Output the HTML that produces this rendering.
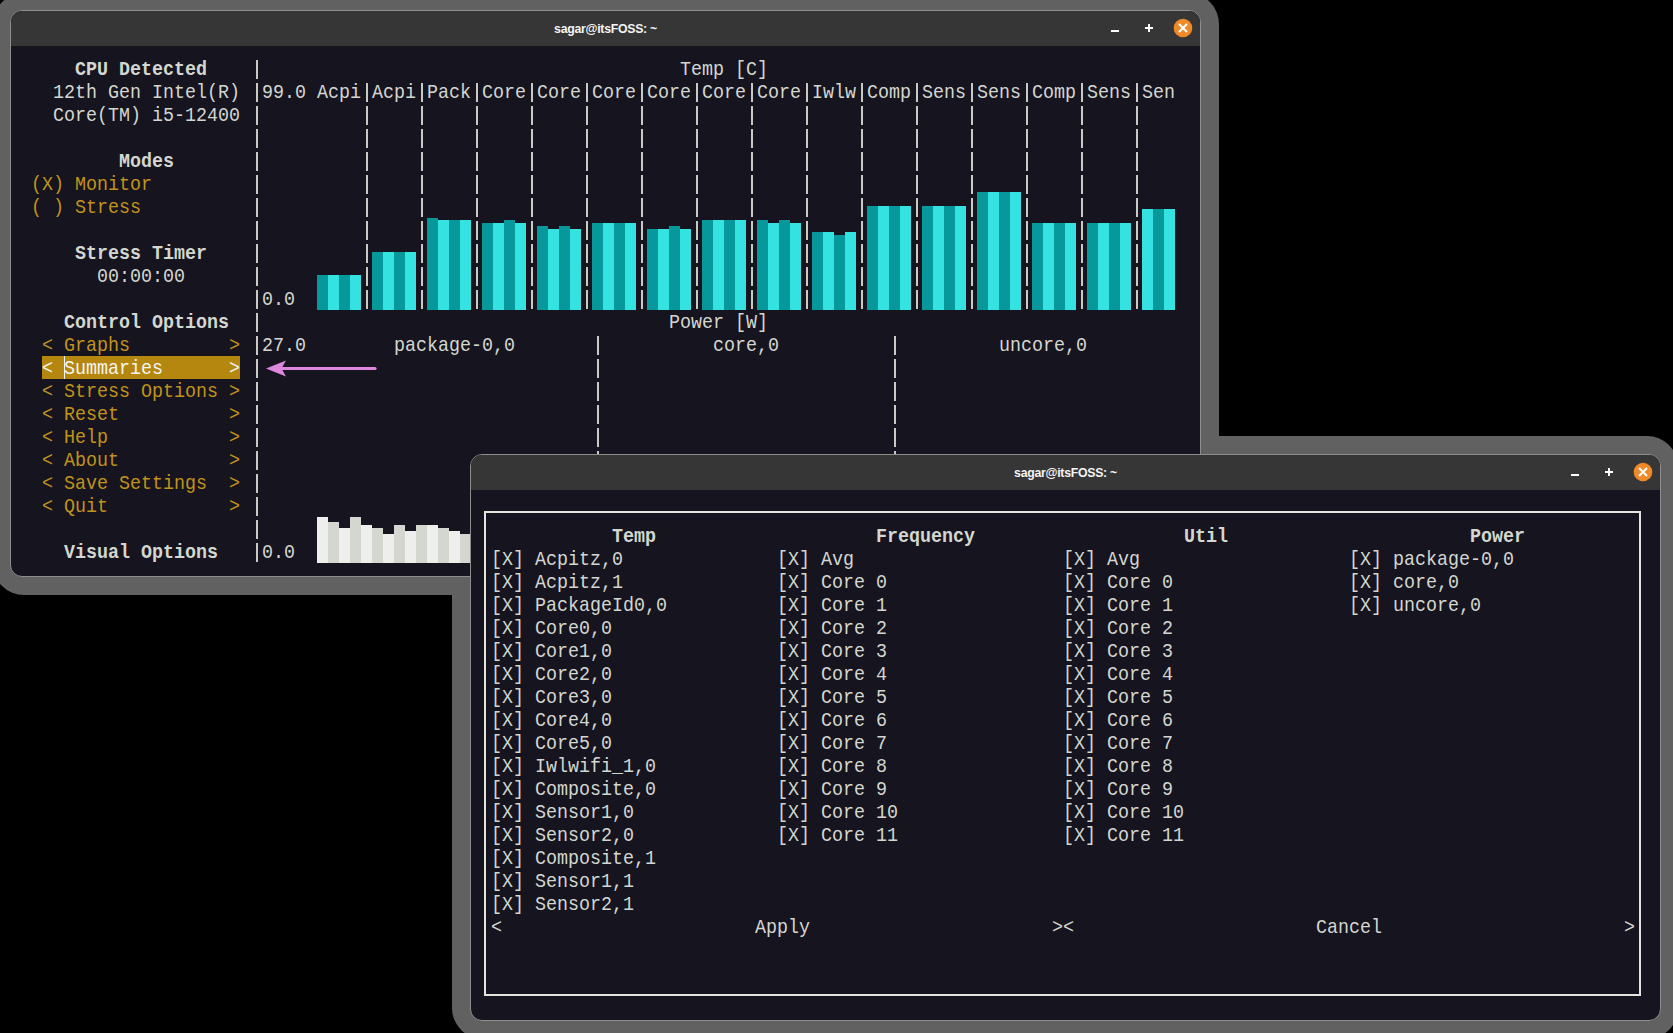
<!DOCTYPE html>
<html><head><meta charset="utf-8"><style>
html,body{margin:0;padding:0;}
body{width:1673px;height:1033px;background:#000;position:relative;overflow:hidden;}
.frame{position:absolute;background:#616161;border-radius:31px;}
.win{position:absolute;width:1189px;height:565px;border:1px solid #8e8e8e;border-radius:12px;overflow:hidden;background:#16141f;}
.tb{position:absolute;left:0;top:0;width:1189px;height:35px;background:#363636;}
.ttl{position:absolute;left:0;top:0;width:1189px;height:35px;line-height:35px;text-align:center;color:#f4f4f4;font-family:"Liberation Sans",sans-serif;font-size:13.5px;font-weight:bold;letter-spacing:-0.3px;transform:scaleX(0.91);}
.p{position:absolute;width:2px;height:19px;background:#c9cac3;}
.r{position:absolute;}
.t{position:absolute;white-space:pre;font-family:"Liberation Mono",monospace;font-size:21.0px;line-height:23px;height:23px;color:#d3d7cf;transform:scaleX(0.87287);transform-origin:0 0;}
</style></head><body>

<div class="frame" style="left:-7px;top:-7px;width:1226px;height:602px"></div>
<div class="frame" style="left:452px;top:436px;width:1226px;height:603px"></div>
<div class="win" style="left:10px;top:10px"><div class="tb"><div class="ttl">sagar@itsFOSS: ~</div><div class="r" style="left:1100px;top:19px;width:8px;height:2px;background:#fff"></div><div class="r" style="left:1134px;top:16px;width:8px;height:2px;background:#fff"></div><div class="r" style="left:1137px;top:13px;width:2px;height:8px;background:#fff"></div><svg class="r" style="left:1161px;top:6px" width="22" height="22" viewBox="0 0 22 22"><circle cx="11" cy="11" r="9.3" fill="#f08a28"/><path d="M7 7L15 15M15 7L7 15" stroke="#fff" stroke-width="2.1" stroke-linecap="butt"/></svg></div><div class="r" style="left:306px;top:264px;width:11px;height:35px;background:#06989a;"></div><div class="r" style="left:317px;top:264px;width:11px;height:35px;background:#34e2e2;"></div><div class="r" style="left:328px;top:264px;width:11px;height:35px;background:#06989a;"></div><div class="r" style="left:339px;top:264px;width:11px;height:35px;background:#34e2e2;"></div><div class="r" style="left:361px;top:241px;width:11px;height:58px;background:#06989a;"></div><div class="r" style="left:372px;top:241px;width:11px;height:58px;background:#34e2e2;"></div><div class="r" style="left:383px;top:241px;width:11px;height:58px;background:#06989a;"></div><div class="r" style="left:394px;top:241px;width:11px;height:58px;background:#34e2e2;"></div><div class="r" style="left:416px;top:207px;width:11px;height:92px;background:#06989a;"></div><div class="r" style="left:427px;top:209px;width:11px;height:90px;background:#34e2e2;"></div><div class="r" style="left:438px;top:209px;width:11px;height:90px;background:#06989a;"></div><div class="r" style="left:449px;top:209px;width:11px;height:90px;background:#34e2e2;"></div><div class="r" style="left:471px;top:212px;width:11px;height:87px;background:#06989a;"></div><div class="r" style="left:482px;top:212px;width:11px;height:87px;background:#34e2e2;"></div><div class="r" style="left:493px;top:209px;width:11px;height:90px;background:#06989a;"></div><div class="r" style="left:504px;top:212px;width:11px;height:87px;background:#34e2e2;"></div><div class="r" style="left:526px;top:215px;width:11px;height:84px;background:#06989a;"></div><div class="r" style="left:537px;top:218px;width:11px;height:81px;background:#34e2e2;"></div><div class="r" style="left:548px;top:215px;width:11px;height:84px;background:#06989a;"></div><div class="r" style="left:559px;top:218px;width:11px;height:81px;background:#34e2e2;"></div><div class="r" style="left:581px;top:212px;width:11px;height:87px;background:#06989a;"></div><div class="r" style="left:592px;top:212px;width:11px;height:87px;background:#34e2e2;"></div><div class="r" style="left:603px;top:212px;width:11px;height:87px;background:#06989a;"></div><div class="r" style="left:614px;top:212px;width:11px;height:87px;background:#34e2e2;"></div><div class="r" style="left:636px;top:218px;width:11px;height:81px;background:#06989a;"></div><div class="r" style="left:647px;top:218px;width:11px;height:81px;background:#34e2e2;"></div><div class="r" style="left:658px;top:215px;width:11px;height:84px;background:#06989a;"></div><div class="r" style="left:669px;top:218px;width:11px;height:81px;background:#34e2e2;"></div><div class="r" style="left:691px;top:209px;width:11px;height:90px;background:#06989a;"></div><div class="r" style="left:702px;top:209px;width:11px;height:90px;background:#34e2e2;"></div><div class="r" style="left:713px;top:209px;width:11px;height:90px;background:#06989a;"></div><div class="r" style="left:724px;top:209px;width:11px;height:90px;background:#34e2e2;"></div><div class="r" style="left:746px;top:209px;width:11px;height:90px;background:#06989a;"></div><div class="r" style="left:757px;top:212px;width:11px;height:87px;background:#34e2e2;"></div><div class="r" style="left:768px;top:209px;width:11px;height:90px;background:#06989a;"></div><div class="r" style="left:779px;top:212px;width:11px;height:87px;background:#34e2e2;"></div><div class="r" style="left:801px;top:221px;width:11px;height:78px;background:#06989a;"></div><div class="r" style="left:812px;top:221px;width:11px;height:78px;background:#34e2e2;"></div><div class="r" style="left:823px;top:224px;width:11px;height:75px;background:#06989a;"></div><div class="r" style="left:834px;top:221px;width:11px;height:78px;background:#34e2e2;"></div><div class="r" style="left:856px;top:195px;width:11px;height:104px;background:#06989a;"></div><div class="r" style="left:867px;top:195px;width:11px;height:104px;background:#34e2e2;"></div><div class="r" style="left:878px;top:195px;width:11px;height:104px;background:#06989a;"></div><div class="r" style="left:889px;top:195px;width:11px;height:104px;background:#34e2e2;"></div><div class="r" style="left:911px;top:195px;width:11px;height:104px;background:#06989a;"></div><div class="r" style="left:922px;top:195px;width:11px;height:104px;background:#34e2e2;"></div><div class="r" style="left:933px;top:195px;width:11px;height:104px;background:#06989a;"></div><div class="r" style="left:944px;top:195px;width:11px;height:104px;background:#34e2e2;"></div><div class="r" style="left:966px;top:181px;width:11px;height:118px;background:#06989a;"></div><div class="r" style="left:977px;top:181px;width:11px;height:118px;background:#34e2e2;"></div><div class="r" style="left:988px;top:181px;width:11px;height:118px;background:#06989a;"></div><div class="r" style="left:999px;top:181px;width:11px;height:118px;background:#34e2e2;"></div><div class="r" style="left:1021px;top:212px;width:11px;height:87px;background:#06989a;"></div><div class="r" style="left:1032px;top:212px;width:11px;height:87px;background:#34e2e2;"></div><div class="r" style="left:1043px;top:212px;width:11px;height:87px;background:#06989a;"></div><div class="r" style="left:1054px;top:212px;width:11px;height:87px;background:#34e2e2;"></div><div class="r" style="left:1076px;top:212px;width:11px;height:87px;background:#06989a;"></div><div class="r" style="left:1087px;top:212px;width:11px;height:87px;background:#34e2e2;"></div><div class="r" style="left:1098px;top:212px;width:11px;height:87px;background:#06989a;"></div><div class="r" style="left:1109px;top:212px;width:11px;height:87px;background:#34e2e2;"></div><div class="r" style="left:1131px;top:198px;width:11px;height:101px;background:#34e2e2;"></div><div class="r" style="left:1142px;top:198px;width:11px;height:101px;background:#06989a;"></div><div class="r" style="left:1153px;top:198px;width:11px;height:101px;background:#34e2e2;"></div><div class="r" style="left:306px;top:506px;width:11px;height:46px;background:#eeeeec;"></div><div class="r" style="left:317px;top:511px;width:11px;height:41px;background:#d3d7cf;"></div><div class="r" style="left:328px;top:517px;width:11px;height:35px;background:#eeeeec;"></div><div class="r" style="left:339px;top:506px;width:11px;height:46px;background:#d3d7cf;"></div><div class="r" style="left:350px;top:514px;width:11px;height:38px;background:#eeeeec;"></div><div class="r" style="left:361px;top:517px;width:11px;height:35px;background:#d3d7cf;"></div><div class="r" style="left:372px;top:523px;width:11px;height:29px;background:#eeeeec;"></div><div class="r" style="left:383px;top:514px;width:11px;height:38px;background:#d3d7cf;"></div><div class="r" style="left:394px;top:520px;width:11px;height:32px;background:#eeeeec;"></div><div class="r" style="left:405px;top:514px;width:11px;height:38px;background:#d3d7cf;"></div><div class="r" style="left:416px;top:514px;width:11px;height:38px;background:#eeeeec;"></div><div class="r" style="left:427px;top:517px;width:11px;height:35px;background:#d3d7cf;"></div><div class="r" style="left:438px;top:520px;width:11px;height:32px;background:#eeeeec;"></div><div class="r" style="left:449px;top:523px;width:11px;height:29px;background:#d3d7cf;"></div><div class="r" style="left:460px;top:523px;width:11px;height:29px;background:#eeeeec;"></div><div class="r" style="left:471px;top:520px;width:11px;height:32px;background:#d3d7cf;"></div><div class="r" style="left:482px;top:517px;width:11px;height:35px;background:#eeeeec;"></div><div class="r" style="left:31px;top:345px;width:198px;height:23px;background:#b5870f;"></div><div class="r" style="left:53px;top:345px;width:1px;height:23px;background:#f4f4f4;"></div><div class="t" style="left:64px;top:47px;font-weight:bold;">CPU Detected</div><div class="t" style="left:669px;top:47px;">Temp [C]</div><div class="t" style="left:42px;top:70px;">12th Gen Intel(R)</div><div class="t" style="left:251px;top:70px;">99.0 Acpi Acpi Pack Core Core Core Core Core Core Iwlw Comp Sens Sens Comp Sens Sen</div><div class="t" style="left:42px;top:93px;">Core(TM) i5-12400</div><div class="p" style="left:245px;top:72px"></div><div class="p" style="left:355px;top:72px"></div><div class="p" style="left:410px;top:72px"></div><div class="p" style="left:465px;top:72px"></div><div class="p" style="left:520px;top:72px"></div><div class="p" style="left:575px;top:72px"></div><div class="p" style="left:630px;top:72px"></div><div class="p" style="left:685px;top:72px"></div><div class="p" style="left:740px;top:72px"></div><div class="p" style="left:795px;top:72px"></div><div class="p" style="left:850px;top:72px"></div><div class="p" style="left:905px;top:72px"></div><div class="p" style="left:960px;top:72px"></div><div class="p" style="left:1015px;top:72px"></div><div class="p" style="left:1070px;top:72px"></div><div class="p" style="left:1125px;top:72px"></div><div class="p" style="left:245px;top:95px"></div><div class="p" style="left:355px;top:95px"></div><div class="p" style="left:410px;top:95px"></div><div class="p" style="left:465px;top:95px"></div><div class="p" style="left:520px;top:95px"></div><div class="p" style="left:575px;top:95px"></div><div class="p" style="left:630px;top:95px"></div><div class="p" style="left:685px;top:95px"></div><div class="p" style="left:740px;top:95px"></div><div class="p" style="left:795px;top:95px"></div><div class="p" style="left:850px;top:95px"></div><div class="p" style="left:905px;top:95px"></div><div class="p" style="left:960px;top:95px"></div><div class="p" style="left:1015px;top:95px"></div><div class="p" style="left:1070px;top:95px"></div><div class="p" style="left:1125px;top:95px"></div><div class="p" style="left:245px;top:118px"></div><div class="p" style="left:355px;top:118px"></div><div class="p" style="left:410px;top:118px"></div><div class="p" style="left:465px;top:118px"></div><div class="p" style="left:520px;top:118px"></div><div class="p" style="left:575px;top:118px"></div><div class="p" style="left:630px;top:118px"></div><div class="p" style="left:685px;top:118px"></div><div class="p" style="left:740px;top:118px"></div><div class="p" style="left:795px;top:118px"></div><div class="p" style="left:850px;top:118px"></div><div class="p" style="left:905px;top:118px"></div><div class="p" style="left:960px;top:118px"></div><div class="p" style="left:1015px;top:118px"></div><div class="p" style="left:1070px;top:118px"></div><div class="p" style="left:1125px;top:118px"></div><div class="p" style="left:245px;top:141px"></div><div class="p" style="left:355px;top:141px"></div><div class="p" style="left:410px;top:141px"></div><div class="p" style="left:465px;top:141px"></div><div class="p" style="left:520px;top:141px"></div><div class="p" style="left:575px;top:141px"></div><div class="p" style="left:630px;top:141px"></div><div class="p" style="left:685px;top:141px"></div><div class="p" style="left:740px;top:141px"></div><div class="p" style="left:795px;top:141px"></div><div class="p" style="left:850px;top:141px"></div><div class="p" style="left:905px;top:141px"></div><div class="p" style="left:960px;top:141px"></div><div class="p" style="left:1015px;top:141px"></div><div class="p" style="left:1070px;top:141px"></div><div class="p" style="left:1125px;top:141px"></div><div class="p" style="left:245px;top:164px"></div><div class="p" style="left:355px;top:164px"></div><div class="p" style="left:410px;top:164px"></div><div class="p" style="left:465px;top:164px"></div><div class="p" style="left:520px;top:164px"></div><div class="p" style="left:575px;top:164px"></div><div class="p" style="left:630px;top:164px"></div><div class="p" style="left:685px;top:164px"></div><div class="p" style="left:740px;top:164px"></div><div class="p" style="left:795px;top:164px"></div><div class="p" style="left:850px;top:164px"></div><div class="p" style="left:905px;top:164px"></div><div class="p" style="left:960px;top:164px"></div><div class="p" style="left:1015px;top:164px"></div><div class="p" style="left:1070px;top:164px"></div><div class="p" style="left:1125px;top:164px"></div><div class="p" style="left:245px;top:187px"></div><div class="p" style="left:355px;top:187px"></div><div class="p" style="left:410px;top:187px"></div><div class="p" style="left:465px;top:187px"></div><div class="p" style="left:520px;top:187px"></div><div class="p" style="left:575px;top:187px"></div><div class="p" style="left:630px;top:187px"></div><div class="p" style="left:685px;top:187px"></div><div class="p" style="left:740px;top:187px"></div><div class="p" style="left:795px;top:187px"></div><div class="p" style="left:850px;top:187px"></div><div class="p" style="left:905px;top:187px"></div><div class="p" style="left:960px;top:187px"></div><div class="p" style="left:1015px;top:187px"></div><div class="p" style="left:1070px;top:187px"></div><div class="p" style="left:1125px;top:187px"></div><div class="p" style="left:245px;top:210px"></div><div class="p" style="left:355px;top:210px"></div><div class="p" style="left:410px;top:210px"></div><div class="p" style="left:465px;top:210px"></div><div class="p" style="left:520px;top:210px"></div><div class="p" style="left:575px;top:210px"></div><div class="p" style="left:630px;top:210px"></div><div class="p" style="left:685px;top:210px"></div><div class="p" style="left:740px;top:210px"></div><div class="p" style="left:795px;top:210px"></div><div class="p" style="left:850px;top:210px"></div><div class="p" style="left:905px;top:210px"></div><div class="p" style="left:960px;top:210px"></div><div class="p" style="left:1015px;top:210px"></div><div class="p" style="left:1070px;top:210px"></div><div class="p" style="left:1125px;top:210px"></div><div class="p" style="left:245px;top:233px"></div><div class="p" style="left:355px;top:233px"></div><div class="p" style="left:410px;top:233px"></div><div class="p" style="left:465px;top:233px"></div><div class="p" style="left:520px;top:233px"></div><div class="p" style="left:575px;top:233px"></div><div class="p" style="left:630px;top:233px"></div><div class="p" style="left:685px;top:233px"></div><div class="p" style="left:740px;top:233px"></div><div class="p" style="left:795px;top:233px"></div><div class="p" style="left:850px;top:233px"></div><div class="p" style="left:905px;top:233px"></div><div class="p" style="left:960px;top:233px"></div><div class="p" style="left:1015px;top:233px"></div><div class="p" style="left:1070px;top:233px"></div><div class="p" style="left:1125px;top:233px"></div><div class="p" style="left:245px;top:256px"></div><div class="p" style="left:355px;top:256px"></div><div class="p" style="left:410px;top:256px"></div><div class="p" style="left:465px;top:256px"></div><div class="p" style="left:520px;top:256px"></div><div class="p" style="left:575px;top:256px"></div><div class="p" style="left:630px;top:256px"></div><div class="p" style="left:685px;top:256px"></div><div class="p" style="left:740px;top:256px"></div><div class="p" style="left:795px;top:256px"></div><div class="p" style="left:850px;top:256px"></div><div class="p" style="left:905px;top:256px"></div><div class="p" style="left:960px;top:256px"></div><div class="p" style="left:1015px;top:256px"></div><div class="p" style="left:1070px;top:256px"></div><div class="p" style="left:1125px;top:256px"></div><div class="p" style="left:245px;top:279px"></div><div class="p" style="left:355px;top:279px"></div><div class="p" style="left:410px;top:279px"></div><div class="p" style="left:465px;top:279px"></div><div class="p" style="left:520px;top:279px"></div><div class="p" style="left:575px;top:279px"></div><div class="p" style="left:630px;top:279px"></div><div class="p" style="left:685px;top:279px"></div><div class="p" style="left:740px;top:279px"></div><div class="p" style="left:795px;top:279px"></div><div class="p" style="left:850px;top:279px"></div><div class="p" style="left:905px;top:279px"></div><div class="p" style="left:960px;top:279px"></div><div class="p" style="left:1015px;top:279px"></div><div class="p" style="left:1070px;top:279px"></div><div class="p" style="left:1125px;top:279px"></div><div class="p" style="left:245px;top:49px"></div><div class="p" style="left:245px;top:302px"></div><div class="p" style="left:245px;top:325px"></div><div class="p" style="left:245px;top:348px"></div><div class="p" style="left:245px;top:371px"></div><div class="p" style="left:245px;top:394px"></div><div class="p" style="left:245px;top:417px"></div><div class="p" style="left:245px;top:440px"></div><div class="p" style="left:245px;top:463px"></div><div class="p" style="left:245px;top:486px"></div><div class="p" style="left:245px;top:509px"></div><div class="p" style="left:245px;top:532px"></div><div class="p" style="left:586px;top:325px"></div><div class="p" style="left:883px;top:325px"></div><div class="p" style="left:586px;top:348px"></div><div class="p" style="left:883px;top:348px"></div><div class="p" style="left:586px;top:371px"></div><div class="p" style="left:883px;top:371px"></div><div class="p" style="left:586px;top:394px"></div><div class="p" style="left:883px;top:394px"></div><div class="p" style="left:586px;top:417px"></div><div class="p" style="left:883px;top:417px"></div><div class="p" style="left:586px;top:440px"></div><div class="p" style="left:883px;top:440px"></div><div class="t" style="left:108px;top:139px;font-weight:bold;">Modes</div><div class="t" style="left:20px;top:162px;color:#c0931a;">(X) Monitor</div><div class="t" style="left:20px;top:185px;color:#c0931a;">( ) Stress</div><div class="t" style="left:64px;top:231px;font-weight:bold;">Stress Timer</div><div class="t" style="left:86px;top:254px;">00:00:00</div><div class="t" style="left:251px;top:277px;">0.0</div><div class="t" style="left:53px;top:300px;font-weight:bold;">Control Options</div><div class="t" style="left:658px;top:300px;">Power [W]</div><div class="t" style="left:251px;top:323px;">27.0</div><div class="t" style="left:383px;top:323px;">package-0,0</div><div class="t" style="left:702px;top:323px;">core,0</div><div class="t" style="left:988px;top:323px;">uncore,0</div><div class="t" style="left:31px;top:323px;color:#c0931a;">&lt; Graphs         &gt;</div><div class="t" style="left:31px;top:346px;color:#f4f4f4;">&lt; Summaries      &gt;</div><div class="t" style="left:31px;top:369px;color:#c0931a;">&lt; Stress Options &gt;</div><div class="t" style="left:31px;top:392px;color:#c0931a;">&lt; Reset          &gt;</div><div class="t" style="left:31px;top:415px;color:#c0931a;">&lt; Help           &gt;</div><div class="t" style="left:31px;top:438px;color:#c0931a;">&lt; About          &gt;</div><div class="t" style="left:31px;top:461px;color:#c0931a;">&lt; Save Settings  &gt;</div><div class="t" style="left:31px;top:484px;color:#c0931a;">&lt; Quit           &gt;</div><div class="t" style="left:53px;top:530px;font-weight:bold;">Visual Options</div><div class="t" style="left:251px;top:530px;">0.0</div><svg class="r" style="left:255px;top:347px" width="130" height="24" viewBox="0 0 130 24"><path d="M16 10.5H109" stroke="#dd88dd" stroke-width="3.2" stroke-linecap="round"/><path d="M0 10.5L20 2.5L15.5 10.5L20 18.5Z" fill="#dd88dd"/></svg></div>
<div class="win" style="left:470px;top:454px"><div class="tb"><div class="ttl">sagar@itsFOSS: ~</div><div class="r" style="left:1100px;top:19px;width:8px;height:2px;background:#fff"></div><div class="r" style="left:1134px;top:16px;width:8px;height:2px;background:#fff"></div><div class="r" style="left:1137px;top:13px;width:2px;height:8px;background:#fff"></div><svg class="r" style="left:1161px;top:6px" width="22" height="22" viewBox="0 0 22 22"><circle cx="11" cy="11" r="9.3" fill="#f08a28"/><path d="M7 7L15 15M15 7L7 15" stroke="#fff" stroke-width="2.1" stroke-linecap="butt"/></svg></div><div class="r" style="left:13px;top:56px;width:1153px;height:481px;border:2px solid #e6e4de;"></div><div class="t" style="left:141px;top:70px;font-weight:bold;">Temp</div><div class="t" style="left:405px;top:70px;font-weight:bold;">Frequency</div><div class="t" style="left:713px;top:70px;font-weight:bold;">Util</div><div class="t" style="left:999px;top:70px;font-weight:bold;">Power</div><div class="t" style="left:20px;top:93px;">[X] Acpitz,0</div><div class="t" style="left:20px;top:116px;">[X] Acpitz,1</div><div class="t" style="left:20px;top:139px;">[X] PackageId0,0</div><div class="t" style="left:20px;top:162px;">[X] Core0,0</div><div class="t" style="left:20px;top:185px;">[X] Core1,0</div><div class="t" style="left:20px;top:208px;">[X] Core2,0</div><div class="t" style="left:20px;top:231px;">[X] Core3,0</div><div class="t" style="left:20px;top:254px;">[X] Core4,0</div><div class="t" style="left:20px;top:277px;">[X] Core5,0</div><div class="t" style="left:20px;top:300px;">[X] Iwlwifi_1,0</div><div class="t" style="left:20px;top:323px;">[X] Composite,0</div><div class="t" style="left:20px;top:346px;">[X] Sensor1,0</div><div class="t" style="left:20px;top:369px;">[X] Sensor2,0</div><div class="t" style="left:20px;top:392px;">[X] Composite,1</div><div class="t" style="left:20px;top:415px;">[X] Sensor1,1</div><div class="t" style="left:20px;top:438px;">[X] Sensor2,1</div><div class="t" style="left:306px;top:93px;">[X] Avg</div><div class="t" style="left:592px;top:93px;">[X] Avg</div><div class="t" style="left:306px;top:116px;">[X] Core 0</div><div class="t" style="left:592px;top:116px;">[X] Core 0</div><div class="t" style="left:306px;top:139px;">[X] Core 1</div><div class="t" style="left:592px;top:139px;">[X] Core 1</div><div class="t" style="left:306px;top:162px;">[X] Core 2</div><div class="t" style="left:592px;top:162px;">[X] Core 2</div><div class="t" style="left:306px;top:185px;">[X] Core 3</div><div class="t" style="left:592px;top:185px;">[X] Core 3</div><div class="t" style="left:306px;top:208px;">[X] Core 4</div><div class="t" style="left:592px;top:208px;">[X] Core 4</div><div class="t" style="left:306px;top:231px;">[X] Core 5</div><div class="t" style="left:592px;top:231px;">[X] Core 5</div><div class="t" style="left:306px;top:254px;">[X] Core 6</div><div class="t" style="left:592px;top:254px;">[X] Core 6</div><div class="t" style="left:306px;top:277px;">[X] Core 7</div><div class="t" style="left:592px;top:277px;">[X] Core 7</div><div class="t" style="left:306px;top:300px;">[X] Core 8</div><div class="t" style="left:592px;top:300px;">[X] Core 8</div><div class="t" style="left:306px;top:323px;">[X] Core 9</div><div class="t" style="left:592px;top:323px;">[X] Core 9</div><div class="t" style="left:306px;top:346px;">[X] Core 10</div><div class="t" style="left:592px;top:346px;">[X] Core 10</div><div class="t" style="left:306px;top:369px;">[X] Core 11</div><div class="t" style="left:592px;top:369px;">[X] Core 11</div><div class="t" style="left:878px;top:93px;">[X] package-0,0</div><div class="t" style="left:878px;top:116px;">[X] core,0</div><div class="t" style="left:878px;top:139px;">[X] uncore,0</div><div class="t" style="left:20px;top:461px;">&lt;</div><div class="t" style="left:284px;top:461px;">Apply</div><div class="t" style="left:581px;top:461px;">&gt;&lt;</div><div class="t" style="left:845px;top:461px;">Cancel</div><div class="t" style="left:1153px;top:461px;">&gt;</div></div>
</body></html>
